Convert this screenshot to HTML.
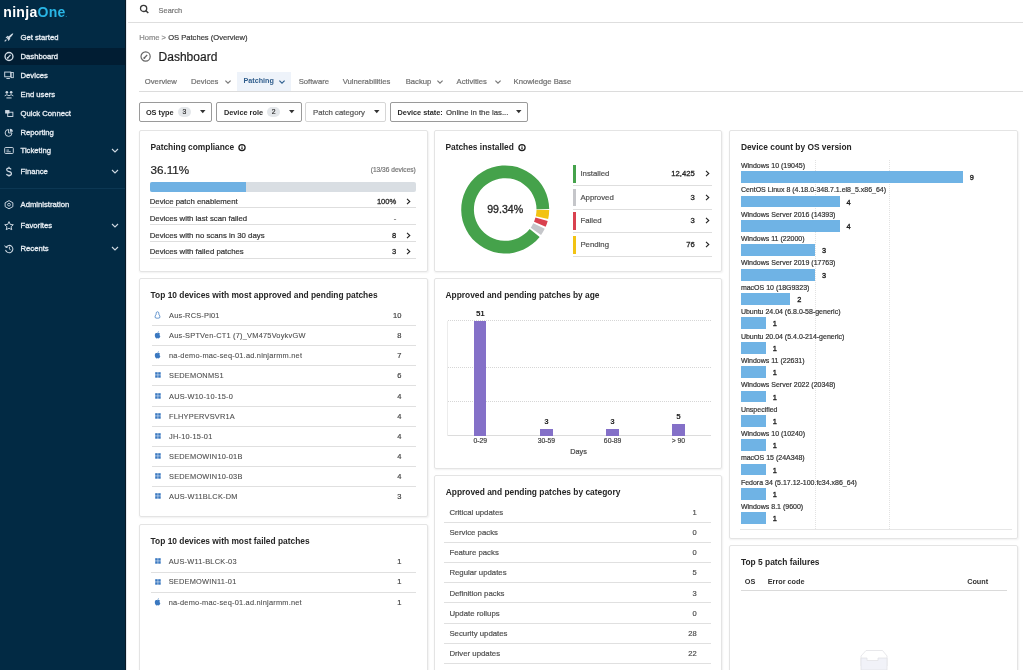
<!DOCTYPE html>
<html><head><meta charset="utf-8"><style>
html,body{margin:0;padding:0;width:1023px;height:670px;overflow:hidden;background:#fff;position:relative}
.t{position:absolute;white-space:nowrap;line-height:1;font-family:"Liberation Sans",sans-serif}
.t.r{-webkit-text-stroke:0.2px currentColor}
svg{overflow:visible}
</style></head><body>
<div style="position:absolute;left:0;top:0;width:1023px;height:670px;will-change:transform">
<div style="position:absolute;left:0px;top:0px;width:125px;height:670px;background:#022a44"></div><div style="position:absolute;left:125px;top:0px;width:1px;height:670px;background:#0a1a26"></div><div style="position:absolute;left:126px;top:0px;width:1px;height:670px;background:#e3e9f0"></div><div class="t" style="left:3.3px;top:5.40px;font-size:14px;color:#ffffff;font-weight:700;letter-spacing:0.3px">ninja<span style="color:#29b6e6">One</span><span style="color:#29b6e6;font-size:5px">.</span></div><div style="position:absolute;left:0px;top:48px;width:125px;height:17px;background:#011d33"></div><div class="t r" style="left:20.5px;top:33.73px;font-size:7.7px;color:#e8eef4;font-weight:400;-webkit-text-stroke:0.3px currentColor">Get started</div><div class="t r" style="left:20.5px;top:52.73px;font-size:7.7px;color:#e8eef4;font-weight:400;-webkit-text-stroke:0.3px currentColor">Dashboard</div><div class="t r" style="left:20.5px;top:71.73px;font-size:7.7px;color:#e8eef4;font-weight:400;-webkit-text-stroke:0.3px currentColor">Devices</div><div class="t r" style="left:20.5px;top:90.73px;font-size:7.7px;color:#e8eef4;font-weight:400;-webkit-text-stroke:0.3px currentColor">End users</div><div class="t r" style="left:20.5px;top:109.73px;font-size:7.7px;color:#e8eef4;font-weight:400;-webkit-text-stroke:0.3px currentColor">Quick Connect</div><div class="t r" style="left:20.5px;top:128.73px;font-size:7.7px;color:#e8eef4;font-weight:400;-webkit-text-stroke:0.3px currentColor">Reporting</div><div class="t r" style="left:20.5px;top:146.73px;font-size:7.7px;color:#e8eef4;font-weight:400;-webkit-text-stroke:0.3px currentColor">Ticketing</div><div class="t r" style="left:20.5px;top:167.73px;font-size:7.7px;color:#e8eef4;font-weight:400;-webkit-text-stroke:0.3px currentColor">Finance</div><div class="t r" style="left:20.5px;top:200.73px;font-size:7.7px;color:#e8eef4;font-weight:400;-webkit-text-stroke:0.3px currentColor">Administration</div><div class="t r" style="left:20.5px;top:221.73px;font-size:7.7px;color:#e8eef4;font-weight:400;-webkit-text-stroke:0.3px currentColor">Favorites</div><div class="t r" style="left:20.5px;top:244.73px;font-size:7.7px;color:#e8eef4;font-weight:400;-webkit-text-stroke:0.3px currentColor">Recents</div><svg style="position:absolute;left:111px;top:147.5px;" width="8" height="5" viewBox="0 0 8 5"><path d="M1 1 L4 4 L7 1" fill="none" stroke="#cfd9e2" stroke-width="1.1"/></svg><svg style="position:absolute;left:111px;top:168.5px;" width="8" height="5" viewBox="0 0 8 5"><path d="M1 1 L4 4 L7 1" fill="none" stroke="#cfd9e2" stroke-width="1.1"/></svg><svg style="position:absolute;left:111px;top:222.5px;" width="8" height="5" viewBox="0 0 8 5"><path d="M1 1 L4 4 L7 1" fill="none" stroke="#cfd9e2" stroke-width="1.1"/></svg><svg style="position:absolute;left:111px;top:245.5px;" width="8" height="5" viewBox="0 0 8 5"><path d="M1 1 L4 4 L7 1" fill="none" stroke="#cfd9e2" stroke-width="1.1"/></svg><div style="position:absolute;left:0px;top:188px;width:125px;height:1px;background:#0c3753"></div><svg style="position:absolute;left:3px;top:31.7px;" width="12" height="11" viewBox="0 0 12 11"><g transform="translate(6 5.5) scale(0.86) translate(-6 -5.5)"><path d="M3.5 6.5 L7.5 2.5 Q9.5 0.8 11 0.5 Q10.8 2.2 9 4 L5 8 Z" fill="#d0dae4"/><path d="M2 5.5 L4.5 3.5 L6 4 L3.5 6.5 Z M5.5 9.5 L7.5 7 L7 5.5 L4.5 8 Z" fill="#d0dae4"/><path d="M1 10 L3 8" stroke="#d0dae4" stroke-width="1.2"/></g></svg><svg style="position:absolute;left:3px;top:50.7px;" width="12" height="11" viewBox="0 0 12 11"><g transform="translate(6 5.5) scale(0.86) translate(-6 -5.5)"><circle cx="6" cy="5.5" r="4.6" fill="none" stroke="#d0dae4" stroke-width="1.6"/><path d="M4.3 7.3 L7.8 3.6" stroke="#d0dae4" stroke-width="1.4"/><circle cx="4.4" cy="7.2" r="1" fill="#d0dae4"/></g></svg><svg style="position:absolute;left:3px;top:69.7px;" width="12" height="11" viewBox="0 0 12 11"><g transform="translate(6 5.5) scale(0.86) translate(-6 -5.5)"><rect x="1" y="1.5" width="7" height="5.5" fill="none" stroke="#d0dae4" stroke-width="1.1"/><rect x="8.5" y="2" width="2.5" height="6" fill="none" stroke="#d0dae4" stroke-width="1"/><path d="M3 9 H7" stroke="#d0dae4" stroke-width="1.1"/></g></svg><svg style="position:absolute;left:3px;top:88.7px;" width="12" height="11" viewBox="0 0 12 11"><g transform="translate(6 5.5) scale(0.86) translate(-6 -5.5)"><circle cx="3.5" cy="3" r="1.5" fill="#d0dae4"/><circle cx="8.5" cy="3" r="1.5" fill="#d0dae4"/><path d="M1 7 Q3.5 4.5 6 7 Q8.5 4.5 11 7" fill="none" stroke="#d0dae4" stroke-width="1.1"/><path d="M3 9.5 H9" stroke="#d0dae4" stroke-width="1.2"/></g></svg><svg style="position:absolute;left:3px;top:107.7px;" width="12" height="11" viewBox="0 0 12 11"><g transform="translate(6 5.5) scale(0.86) translate(-6 -5.5)"><rect x="1.5" y="1.5" width="5" height="4" fill="#d0dae4"/><rect x="4.5" y="4" width="6" height="5" fill="none" stroke="#d0dae4" stroke-width="1.1"/></g></svg><svg style="position:absolute;left:3px;top:126.7px;" width="12" height="11" viewBox="0 0 12 11"><g transform="translate(6 5.5) scale(0.86) translate(-6 -5.5)"><path d="M5.5 2 A4 4 0 1 0 9.5 6 L5.5 6 Z" fill="none" stroke="#d0dae4" stroke-width="1.1"/><path d="M7 1 L7 4.5 L10.5 4.5 A3.5 3.5 0 0 0 7 1 Z" fill="#d0dae4"/></g></svg><svg style="position:absolute;left:3px;top:144.7px;" width="12" height="11" viewBox="0 0 12 11"><g transform="translate(6 5.5) scale(0.86) translate(-6 -5.5)"><rect x="1" y="2" width="10" height="7" rx="1" fill="none" stroke="#d0dae4" stroke-width="1.1"/><path d="M3 5 H6 M3 7 H8" stroke="#d0dae4" stroke-width="1"/></g></svg><svg style="position:absolute;left:3px;top:165.7px;" width="12" height="11" viewBox="0 0 12 11"><g transform="translate(6 5.5) scale(0.86) translate(-6 -5.5)"><path d="M8.5 3 Q7.5 1.5 5.8 1.5 Q3.3 1.5 3.3 3.5 Q3.3 5.2 6 5.6 Q8.8 6 8.8 8 Q8.8 10 6 10 Q4 10 3 8.5" fill="none" stroke="#d0dae4" stroke-width="1.4"/><path d="M6 0 V1.5 M6 10 V11.5" stroke="#d0dae4" stroke-width="1.2"/></g></svg><svg style="position:absolute;left:3px;top:198.7px;" width="12" height="11" viewBox="0 0 12 11"><g transform="translate(6 5.5) scale(0.86) translate(-6 -5.5)"><path d="M6 1 L10.5 3.5 L10.5 8 L6 10.5 L1.5 8 L1.5 3.5 Z" fill="none" stroke="#d0dae4" stroke-width="1.1"/><circle cx="6" cy="5.7" r="1.6" fill="none" stroke="#d0dae4" stroke-width="1"/></g></svg><svg style="position:absolute;left:3px;top:219.7px;" width="12" height="11" viewBox="0 0 12 11"><g transform="translate(6 5.5) scale(0.86) translate(-6 -5.5)"><path d="M6 1 L7.5 4.3 L11 4.6 L8.4 6.9 L9.2 10.4 L6 8.6 L2.8 10.4 L3.6 6.9 L1 4.6 L4.5 4.3 Z" fill="none" stroke="#d0dae4" stroke-width="1.1"/></g></svg><svg style="position:absolute;left:3px;top:242.7px;" width="12" height="11" viewBox="0 0 12 11"><g transform="translate(6 5.5) scale(0.86) translate(-6 -5.5)"><path d="M2.5 4 A4.3 4.3 0 1 1 2 7" fill="none" stroke="#d0dae4" stroke-width="1.2"/><path d="M1 2 L2.5 4.5 L5 3.5" fill="none" stroke="#d0dae4" stroke-width="1.1"/><path d="M6.5 3.5 V6 L8 7.5" fill="none" stroke="#d0dae4" stroke-width="1.1"/></g></svg><svg style="position:absolute;left:139px;top:4px;" width="11" height="10" viewBox="0 0 11 10"><circle cx="4.6" cy="4.4" r="3.1" fill="none" stroke="#3a3a3a" stroke-width="1.3"/><path d="M6.9 6.7 L9.3 9" stroke="#3a3a3a" stroke-width="1.5"/></svg><div class="t r" style="left:158.6px;top:6.99px;font-size:7.4px;color:#777;font-weight:400;">Search</div><div style="position:absolute;left:128px;top:22px;width:895px;height:1px;background:#dedede"></div><div class="t r" style="left:139.2px;top:33.82px;font-size:7.6px;color:#3a3a3a;font-weight:400;"><span style="color:#888">Home</span> <span style="color:#888">&gt;</span> OS Patches (Overview)</div><svg style="position:absolute;left:140px;top:50.5px;" width="12" height="12" viewBox="0 0 12 12"><circle cx="5.6" cy="5.5" r="4.6" fill="none" stroke="#666" stroke-width="1.2"/><path d="M4.2 7 L7.2 4" stroke="#666" stroke-width="1.2"/><circle cx="4.3" cy="6.9" r="1" fill="#666"/></svg><div class="t r" style="left:158.6px;top:51.09px;font-size:12px;color:#1d1d1d;font-weight:400;">Dashboard</div><div style="position:absolute;left:237px;top:72px;width:54px;height:19px;background:#eef3fa"></div><div class="t r" style="left:144.8px;top:77.73px;font-size:7.7px;color:#6e6e6e;font-weight:400;">Overview</div><div class="t r" style="left:191px;top:77.73px;font-size:7.7px;color:#6e6e6e;font-weight:400;">Devices</div><div class="t" style="left:243.5px;top:77.16px;font-size:7.2px;color:#2f5d8c;font-weight:700;">Patching</div><div class="t r" style="left:298.7px;top:77.73px;font-size:7.7px;color:#6e6e6e;font-weight:400;">Software</div><div class="t r" style="left:342.7px;top:77.73px;font-size:7.7px;color:#6e6e6e;font-weight:400;">Vulnerabilities</div><div class="t r" style="left:405.7px;top:77.73px;font-size:7.7px;color:#6e6e6e;font-weight:400;">Backup</div><div class="t r" style="left:456.6px;top:77.73px;font-size:7.7px;color:#6e6e6e;font-weight:400;">Activities</div><div class="t r" style="left:513.5px;top:77.73px;font-size:7.7px;color:#6e6e6e;font-weight:400;">Knowledge Base</div><svg style="position:absolute;left:225px;top:80px;" width="6" height="4" viewBox="0 0 6 4"><path d="M0.4 0.6 L3 3.2 L5.6 0.6" fill="none" stroke="#777" stroke-width="1.15"/></svg><svg style="position:absolute;left:278.8px;top:80px;" width="6" height="4" viewBox="0 0 6 4"><path d="M0.4 0.6 L3 3.2 L5.6 0.6" fill="none" stroke="#2f5f8f" stroke-width="1.15"/></svg><svg style="position:absolute;left:436.7px;top:80px;" width="6" height="4" viewBox="0 0 6 4"><path d="M0.4 0.6 L3 3.2 L5.6 0.6" fill="none" stroke="#777" stroke-width="1.15"/></svg><svg style="position:absolute;left:494.7px;top:80px;" width="6" height="4" viewBox="0 0 6 4"><path d="M0.4 0.6 L3 3.2 L5.6 0.6" fill="none" stroke="#777" stroke-width="1.15"/></svg><div style="position:absolute;left:139px;top:91px;width:884px;height:1px;background:#dcdcdc"></div><div style="position:absolute;left:139px;top:102px;width:73px;height:20px;border:1px solid #9a9a9a;border-radius:2px;box-sizing:border-box;background:#fff"></div><div style="position:absolute;left:216px;top:102px;width:86px;height:20px;border:1px solid #9a9a9a;border-radius:2px;box-sizing:border-box;background:#fff"></div><div style="position:absolute;left:305px;top:102px;width:81px;height:20px;border:1px solid #d6d6d6;border-radius:2px;box-sizing:border-box;background:#fff"></div><div style="position:absolute;left:390px;top:102px;width:138px;height:20px;border:1px solid #9a9a9a;border-radius:2px;box-sizing:border-box;background:#fff"></div><div class="t" style="left:145.9px;top:109.03px;font-size:7.35px;color:#2a2a2a;font-weight:700;">OS type</div><div class="t" style="left:223.9px;top:109.03px;font-size:7.35px;color:#2a2a2a;font-weight:700;">Device role</div><div class="t r" style="left:313px;top:108.65px;font-size:7.8px;color:#555;font-weight:400;">Patch category</div><div class="t" style="left:397.5px;top:109.03px;font-size:7.35px;color:#2a2a2a;font-weight:700;">Device state:</div><div class="t r" style="left:446px;top:108.65px;font-size:7.8px;color:#444;font-weight:400;">Online in the las...</div><div style="position:absolute;left:178.0px;top:106.5px;width:13px;height:10px;background:#e4e7ea;border-radius:5px"></div><div class="t r" style="left:184.5px;transform:translateX(-50%);top:109.49px;font-size:6.8px;color:#333;font-weight:400;">3</div><div style="position:absolute;left:267.2px;top:106.5px;width:13px;height:10px;background:#e4e7ea;border-radius:5px"></div><div class="t r" style="left:273.7px;transform:translateX(-50%);top:109.49px;font-size:6.8px;color:#333;font-weight:400;">2</div><svg style="position:absolute;left:199.7px;top:110px;" width="6" height="4" viewBox="0 0 6 4"><path d="M0 0 H5.5 L2.75 3.2 Z" fill="#333"/></svg><svg style="position:absolute;left:289px;top:110px;" width="6" height="4" viewBox="0 0 6 4"><path d="M0 0 H5.5 L2.75 3.2 Z" fill="#333"/></svg><svg style="position:absolute;left:373.6px;top:110px;" width="6" height="4" viewBox="0 0 6 4"><path d="M0 0 H5.5 L2.75 3.2 Z" fill="#333"/></svg><svg style="position:absolute;left:516px;top:110px;" width="6" height="4" viewBox="0 0 6 4"><path d="M0 0 H5.5 L2.75 3.2 Z" fill="#333"/></svg><div style="position:absolute;left:139px;top:130px;width:289px;height:142px;border:1px solid #e4e4e4;border-radius:2px;box-sizing:border-box;background:#fff;box-shadow:0.5px 1px 2px rgba(0,0,0,0.06)"></div><div style="position:absolute;left:434px;top:130px;width:288px;height:142px;border:1px solid #e4e4e4;border-radius:2px;box-sizing:border-box;background:#fff;box-shadow:0.5px 1px 2px rgba(0,0,0,0.06)"></div><div style="position:absolute;left:729px;top:130px;width:289px;height:409px;border:1px solid #e4e4e4;border-radius:2px;box-sizing:border-box;background:#fff;box-shadow:0.5px 1px 2px rgba(0,0,0,0.06)"></div><div style="position:absolute;left:139px;top:278px;width:289px;height:239px;border:1px solid #e4e4e4;border-radius:2px;box-sizing:border-box;background:#fff;box-shadow:0.5px 1px 2px rgba(0,0,0,0.06)"></div><div style="position:absolute;left:434px;top:278px;width:288px;height:191px;border:1px solid #e4e4e4;border-radius:2px;box-sizing:border-box;background:#fff;box-shadow:0.5px 1px 2px rgba(0,0,0,0.06)"></div><div style="position:absolute;left:139px;top:524px;width:289px;height:176px;border:1px solid #e4e4e4;border-radius:2px;box-sizing:border-box;background:#fff;box-shadow:0.5px 1px 2px rgba(0,0,0,0.06)"></div><div style="position:absolute;left:434px;top:475px;width:288px;height:225px;border:1px solid #e4e4e4;border-radius:2px;box-sizing:border-box;background:#fff;box-shadow:0.5px 1px 2px rgba(0,0,0,0.06)"></div><div style="position:absolute;left:729px;top:545px;width:289px;height:155px;border:1px solid #e4e4e4;border-radius:2px;box-sizing:border-box;background:#fff;box-shadow:0.5px 1px 2px rgba(0,0,0,0.06)"></div><div class="t" style="left:150.4px;top:143.14px;font-size:8.4px;color:#262626;font-weight:700;">Patching compliance</div><svg style="position:absolute;left:237.5px;top:144px;" width="8" height="8" viewBox="0 0 8 8"><circle cx="4" cy="3.6" r="3.1" fill="none" stroke="#1e1e1e" stroke-width="1.25"/><path d="M4 3.2 V5.2" stroke="#1e1e1e" stroke-width="1.3"/><circle cx="4" cy="2.1" r="0.55" fill="#1e1e1e"/></svg><div class="t r" style="left:150.4px;top:164.35px;font-size:11.7px;color:#1d1d1d;font-weight:400;">36.11%</div><div class="t r" style="right:607.2px;top:166.66px;font-size:6.6px;color:#777;font-weight:400;">(13/36 devices)</div><div style="position:absolute;left:150px;top:182px;width:266px;height:10px;background:#d9dee3;border-radius:2px"></div><div style="position:absolute;left:150px;top:182px;width:96px;height:10px;background:#6fb1e3;border-radius:2px 0 0 2px"></div><div class="t r" style="left:149.7px;top:197.65px;font-size:7.8px;color:#333;font-weight:400;">Device patch enablement</div><div class="t r" style="right:626.7px;top:197.82px;font-size:7.6px;color:#2a2a2a;font-weight:400;-webkit-text-stroke:0.3px currentColor">100%</div><svg style="position:absolute;left:405.5px;top:198.3px;" width="5" height="7" viewBox="0 0 5 7"><path d="M1 0.8 L3.8 3.5 L1 6.2" fill="none" stroke="#222" stroke-width="1.1"/></svg><div style="position:absolute;left:150px;top:207px;width:266px;height:1px;background:#dedede"></div><div class="t r" style="left:149.7px;top:214.65px;font-size:7.8px;color:#333;font-weight:400;">Devices with last scan failed</div><div class="t r" style="right:626.7px;top:214.82px;font-size:7.6px;color:#777;font-weight:400;-webkit-text-stroke:0.3px currentColor">-</div><div style="position:absolute;left:150px;top:224px;width:266px;height:1px;background:#dedede"></div><div class="t r" style="left:149.7px;top:231.65px;font-size:7.8px;color:#333;font-weight:400;">Devices with no scans in 30 days</div><div class="t r" style="right:626.7px;top:231.82px;font-size:7.6px;color:#2a2a2a;font-weight:400;-webkit-text-stroke:0.3px currentColor">8</div><svg style="position:absolute;left:405.5px;top:231.6px;" width="5" height="7" viewBox="0 0 5 7"><path d="M1 0.8 L3.8 3.5 L1 6.2" fill="none" stroke="#222" stroke-width="1.1"/></svg><div style="position:absolute;left:150px;top:241px;width:266px;height:1px;background:#dedede"></div><div class="t r" style="left:149.7px;top:247.65px;font-size:7.8px;color:#333;font-weight:400;">Devices with failed patches</div><div class="t r" style="right:626.7px;top:247.82px;font-size:7.6px;color:#2a2a2a;font-weight:400;-webkit-text-stroke:0.3px currentColor">3</div><svg style="position:absolute;left:405.5px;top:248.2px;" width="5" height="7" viewBox="0 0 5 7"><path d="M1 0.8 L3.8 3.5 L1 6.2" fill="none" stroke="#222" stroke-width="1.1"/></svg><div style="position:absolute;left:150px;top:258px;width:266px;height:1px;background:#dedede"></div><div class="t" style="left:445.4px;top:143.14px;font-size:8.4px;color:#262626;font-weight:700;">Patches installed</div><svg style="position:absolute;left:518px;top:144px;" width="8" height="8" viewBox="0 0 8 8"><circle cx="4" cy="3.6" r="3.1" fill="none" stroke="#1e1e1e" stroke-width="1.25"/><path d="M4 3.2 V5.2" stroke="#1e1e1e" stroke-width="1.3"/><circle cx="4" cy="2.1" r="0.55" fill="#1e1e1e"/></svg><svg style="position:absolute;left:0;top:0" width="1023" height="670"><path d="M549.20 209.88 A44 44 0 0 1 548.16 219.02 L535.76 216.27 A31.3 31.3 0 0 0 536.50 209.77 Z" fill="#f2c313"/><path d="M547.70 220.89 A44 44 0 0 1 545.70 226.69 L534.01 221.73 A31.3 31.3 0 0 0 535.43 217.60 Z" fill="#d9414f"/><path d="M544.75 228.79 A44 44 0 0 1 541.02 235.05 L530.68 227.68 A31.3 31.3 0 0 0 533.33 223.22 Z" fill="#c5c6ca"/><path d="M539.63 236.89 A44 44 0 1 1 549.20 209.12 L536.50 209.23 A31.3 31.3 0 1 0 529.70 228.98 Z" fill="#45a24b"/></svg><div class="t r" style="left:505.2px;transform:translateX(-50%);top:204.28px;font-size:10.6px;color:#262626;font-weight:400;-webkit-text-stroke:0.3px currentColor">99.34%</div><div style="position:absolute;left:573px;top:165.2px;width:3px;height:17.80000000000001px;background:#45a24b"></div><div class="t r" style="left:580.4px;top:169.65px;font-size:7.8px;color:#505050;font-weight:400;">Installed</div><div class="t r" style="right:328.20000000000005px;top:169.73px;font-size:7.7px;color:#262626;font-weight:400;-webkit-text-stroke:0.3px currentColor">12,425</div><svg style="position:absolute;left:704.5px;top:169.8px;" width="5" height="7" viewBox="0 0 5 7"><path d="M1 0.8 L3.8 3.5 L1 6.2" fill="none" stroke="#222" stroke-width="1.1"/></svg><div style="position:absolute;left:573px;top:185px;width:139px;height:1px;background:#dedede"></div><div style="position:absolute;left:573px;top:188.7px;width:3px;height:17.30000000000001px;background:#c5c6ca"></div><div class="t r" style="left:580.4px;top:193.65px;font-size:7.8px;color:#505050;font-weight:400;">Approved</div><div class="t r" style="right:328.20000000000005px;top:193.73px;font-size:7.7px;color:#262626;font-weight:400;-webkit-text-stroke:0.3px currentColor">3</div><svg style="position:absolute;left:704.5px;top:193.7px;" width="5" height="7" viewBox="0 0 5 7"><path d="M1 0.8 L3.8 3.5 L1 6.2" fill="none" stroke="#222" stroke-width="1.1"/></svg><div style="position:absolute;left:573px;top:209px;width:139px;height:1px;background:#dedede"></div><div style="position:absolute;left:573px;top:212.2px;width:3px;height:17.80000000000001px;background:#d9414f"></div><div class="t r" style="left:580.4px;top:216.65px;font-size:7.8px;color:#505050;font-weight:400;">Failed</div><div class="t r" style="right:328.20000000000005px;top:216.73px;font-size:7.7px;color:#262626;font-weight:400;-webkit-text-stroke:0.3px currentColor">3</div><svg style="position:absolute;left:704.5px;top:216.9px;" width="5" height="7" viewBox="0 0 5 7"><path d="M1 0.8 L3.8 3.5 L1 6.2" fill="none" stroke="#222" stroke-width="1.1"/></svg><div style="position:absolute;left:573px;top:232px;width:139px;height:1px;background:#dedede"></div><div style="position:absolute;left:573px;top:235.7px;width:3px;height:18.0px;background:#f2c313"></div><div class="t r" style="left:580.4px;top:240.65px;font-size:7.8px;color:#505050;font-weight:400;">Pending</div><div class="t r" style="right:328.20000000000005px;top:240.73px;font-size:7.7px;color:#262626;font-weight:400;-webkit-text-stroke:0.3px currentColor">76</div><svg style="position:absolute;left:704.5px;top:240.7px;" width="5" height="7" viewBox="0 0 5 7"><path d="M1 0.8 L3.8 3.5 L1 6.2" fill="none" stroke="#222" stroke-width="1.1"/></svg><div style="position:absolute;left:573px;top:256px;width:139px;height:1px;background:#dedede"></div><div class="t" style="left:740.9px;top:143.14px;font-size:8.4px;color:#262626;font-weight:700;">Device count by OS version</div><div style="position:absolute;left:815px;top:160px;width:0px;height:369px;border-left:1px dotted #e2e2e2"></div><div style="position:absolute;left:889px;top:160px;width:0px;height:369px;border-left:1px dotted #e2e2e2"></div><div style="position:absolute;left:740px;top:529px;width:272px;height:1px;background:#e6e6e6"></div><div class="t r" style="left:740.9px;top:162.32px;font-size:7.0px;color:#333;font-weight:400;">Windows 10 (19045)</div><div style="position:absolute;left:741px;top:171.3px;width:221.70000000000005px;height:11.8px;background:#6fb3e5"></div><div class="t r" style="left:969.7px;top:173.99px;font-size:7.4px;color:#1e1e1e;font-weight:400;-webkit-text-stroke:0.35px currentColor">9</div><div class="t r" style="left:740.9px;top:186.32px;font-size:7.0px;color:#333;font-weight:400;">CentOS Linux 8 (4.18.0-348.7.1.el8_5.x86_64)</div><div style="position:absolute;left:741px;top:195.66000000000003px;width:98.53333333333336px;height:11.8px;background:#6fb3e5"></div><div class="t r" style="left:846.5333333333333px;top:198.99px;font-size:7.4px;color:#1e1e1e;font-weight:400;-webkit-text-stroke:0.35px currentColor">4</div><div class="t r" style="left:740.9px;top:211.32px;font-size:7.0px;color:#333;font-weight:400;">Windows Server 2016 (14393)</div><div style="position:absolute;left:741px;top:220.02px;width:98.53333333333336px;height:11.8px;background:#6fb3e5"></div><div class="t r" style="left:846.5333333333333px;top:222.99px;font-size:7.4px;color:#1e1e1e;font-weight:400;-webkit-text-stroke:0.35px currentColor">4</div><div class="t r" style="left:740.9px;top:235.32px;font-size:7.0px;color:#333;font-weight:400;">Windows 11 (22000)</div><div style="position:absolute;left:741px;top:244.38px;width:73.90000000000002px;height:11.8px;background:#6fb3e5"></div><div class="t r" style="left:821.9px;top:246.99px;font-size:7.4px;color:#1e1e1e;font-weight:400;-webkit-text-stroke:0.35px currentColor">3</div><div class="t r" style="left:740.9px;top:259.32px;font-size:7.0px;color:#333;font-weight:400;">Windows Server 2019 (17763)</div><div style="position:absolute;left:741px;top:268.74px;width:73.90000000000002px;height:11.8px;background:#6fb3e5"></div><div class="t r" style="left:821.9px;top:271.99px;font-size:7.4px;color:#1e1e1e;font-weight:400;-webkit-text-stroke:0.35px currentColor">3</div><div class="t r" style="left:740.9px;top:284.32px;font-size:7.0px;color:#333;font-weight:400;">macOS 10 (18G9323)</div><div style="position:absolute;left:741px;top:293.1px;width:49.26666666666668px;height:11.8px;background:#6fb3e5"></div><div class="t r" style="left:797.2666666666667px;top:295.99px;font-size:7.4px;color:#1e1e1e;font-weight:400;-webkit-text-stroke:0.35px currentColor">2</div><div class="t r" style="left:740.9px;top:308.32px;font-size:7.0px;color:#333;font-weight:400;">Ubuntu 24.04 (6.8.0-58-generic)</div><div style="position:absolute;left:741px;top:317.46px;width:24.63333333333334px;height:11.8px;background:#6fb3e5"></div><div class="t r" style="left:772.6333333333333px;top:319.99px;font-size:7.4px;color:#1e1e1e;font-weight:400;-webkit-text-stroke:0.35px currentColor">1</div><div class="t r" style="left:740.9px;top:333.32px;font-size:7.0px;color:#333;font-weight:400;">Ubuntu 20.04 (5.4.0-214-generic)</div><div style="position:absolute;left:741px;top:341.82px;width:24.63333333333334px;height:11.8px;background:#6fb3e5"></div><div class="t r" style="left:772.6333333333333px;top:344.99px;font-size:7.4px;color:#1e1e1e;font-weight:400;-webkit-text-stroke:0.35px currentColor">1</div><div class="t r" style="left:740.9px;top:357.32px;font-size:7.0px;color:#333;font-weight:400;">Windows 11 (22631)</div><div style="position:absolute;left:741px;top:366.18px;width:24.63333333333334px;height:11.8px;background:#6fb3e5"></div><div class="t r" style="left:772.6333333333333px;top:368.99px;font-size:7.4px;color:#1e1e1e;font-weight:400;-webkit-text-stroke:0.35px currentColor">1</div><div class="t r" style="left:740.9px;top:381.32px;font-size:7.0px;color:#333;font-weight:400;">Windows Server 2022 (20348)</div><div style="position:absolute;left:741px;top:390.54px;width:24.63333333333334px;height:11.8px;background:#6fb3e5"></div><div class="t r" style="left:772.6333333333333px;top:393.99px;font-size:7.4px;color:#1e1e1e;font-weight:400;-webkit-text-stroke:0.35px currentColor">1</div><div class="t r" style="left:740.9px;top:406.32px;font-size:7.0px;color:#333;font-weight:400;">Unspecified</div><div style="position:absolute;left:741px;top:414.90000000000003px;width:24.63333333333334px;height:11.8px;background:#6fb3e5"></div><div class="t r" style="left:772.6333333333333px;top:417.99px;font-size:7.4px;color:#1e1e1e;font-weight:400;-webkit-text-stroke:0.35px currentColor">1</div><div class="t r" style="left:740.9px;top:430.32px;font-size:7.0px;color:#333;font-weight:400;">Windows 10 (10240)</div><div style="position:absolute;left:741px;top:439.26px;width:24.63333333333334px;height:11.8px;background:#6fb3e5"></div><div class="t r" style="left:772.6333333333333px;top:441.99px;font-size:7.4px;color:#1e1e1e;font-weight:400;-webkit-text-stroke:0.35px currentColor">1</div><div class="t r" style="left:740.9px;top:454.32px;font-size:7.0px;color:#333;font-weight:400;">macOS 15 (24A348)</div><div style="position:absolute;left:741px;top:463.62px;width:24.63333333333334px;height:11.8px;background:#6fb3e5"></div><div class="t r" style="left:772.6333333333333px;top:466.99px;font-size:7.4px;color:#1e1e1e;font-weight:400;-webkit-text-stroke:0.35px currentColor">1</div><div class="t r" style="left:740.9px;top:479.32px;font-size:7.0px;color:#333;font-weight:400;">Fedora 34 (5.17.12-100.fc34.x86_64)</div><div style="position:absolute;left:741px;top:487.98px;width:24.63333333333334px;height:11.8px;background:#6fb3e5"></div><div class="t r" style="left:772.6333333333333px;top:490.99px;font-size:7.4px;color:#1e1e1e;font-weight:400;-webkit-text-stroke:0.35px currentColor">1</div><div class="t r" style="left:740.9px;top:503.32px;font-size:7.0px;color:#333;font-weight:400;">Windows 8.1 (9600)</div><div style="position:absolute;left:741px;top:512.3399999999999px;width:24.63333333333334px;height:11.8px;background:#6fb3e5"></div><div class="t r" style="left:772.6333333333333px;top:514.99px;font-size:7.4px;color:#1e1e1e;font-weight:400;-webkit-text-stroke:0.35px currentColor">1</div><div class="t" style="left:150.6px;top:291.14px;font-size:8.4px;color:#262626;font-weight:700;">Top 10 devices with most approved and pending patches</div><svg style="position:absolute;left:154px;top:311.0px;" width="7" height="8" viewBox="0 0 7 8"><path d="M3.5 0.8 C2 0.8 2.2 2.5 2.2 3.2 C1.5 4.2 0.8 5.5 1.2 6.6 C1.8 7.4 5.2 7.4 5.8 6.6 C6.2 5.5 5.5 4.2 4.8 3.2 C4.8 2.5 5 0.8 3.5 0.8 Z" fill="none" stroke="#3a78c0" stroke-width="0.8"/></svg><div class="t r" style="left:169px;top:311.99px;font-size:7.4px;color:#4e4e4e;font-weight:400;letter-spacing:0.22px;-webkit-text-stroke:0.1px currentColor">Aus-RCS-Pi01</div><div class="t r" style="right:621.7px;top:311.90px;font-size:7.5px;color:#444;font-weight:400;">10</div><div style="position:absolute;left:152px;top:325px;width:264px;height:1px;background:#e0e0e0"></div><svg style="position:absolute;left:154px;top:331.16px;" width="7" height="8" viewBox="0 0 7 8"><path d="M3.5 2.3 C2.5 1.8 0.8 2 0.8 4.2 C0.8 6 2 7.6 2.8 7.4 C3.2 7.3 3.8 7.3 4.2 7.4 C5 7.6 6.2 6 6.3 5.2 C5.5 4.8 5.3 3.2 6.1 2.6 C5.4 1.8 4.3 1.9 3.5 2.3 Z M3.6 1.9 C3.6 1 4.2 0.4 4.9 0.3 C4.9 1.1 4.4 1.8 3.6 1.9 Z" fill="#3a78c0"/></svg><div class="t r" style="left:169px;top:331.99px;font-size:7.4px;color:#4e4e4e;font-weight:400;letter-spacing:0.22px;-webkit-text-stroke:0.1px currentColor">Aus-SPTVen-CT1 (7)_VM475VoykvGW</div><div class="t r" style="right:621.7px;top:331.90px;font-size:7.5px;color:#444;font-weight:400;">8</div><div style="position:absolute;left:152px;top:345px;width:264px;height:1px;background:#e0e0e0"></div><svg style="position:absolute;left:154px;top:351.32px;" width="7" height="8" viewBox="0 0 7 8"><path d="M3.5 2.3 C2.5 1.8 0.8 2 0.8 4.2 C0.8 6 2 7.6 2.8 7.4 C3.2 7.3 3.8 7.3 4.2 7.4 C5 7.6 6.2 6 6.3 5.2 C5.5 4.8 5.3 3.2 6.1 2.6 C5.4 1.8 4.3 1.9 3.5 2.3 Z M3.6 1.9 C3.6 1 4.2 0.4 4.9 0.3 C4.9 1.1 4.4 1.8 3.6 1.9 Z" fill="#3a78c0"/></svg><div class="t r" style="left:169px;top:351.99px;font-size:7.4px;color:#4e4e4e;font-weight:400;letter-spacing:0.22px;-webkit-text-stroke:0.1px currentColor">na-demo-mac-seq-01.ad.ninjarmm.net</div><div class="t r" style="right:621.7px;top:351.90px;font-size:7.5px;color:#444;font-weight:400;">7</div><div style="position:absolute;left:152px;top:365px;width:264px;height:1px;background:#e0e0e0"></div><svg style="position:absolute;left:154.5px;top:372.48px;" width="6" height="6" viewBox="0 0 6 6"><rect x="0.2" y="0.2" width="2.5" height="2.5" fill="#3a78c0"/><rect x="3.2" y="0.2" width="2.5" height="2.5" fill="#3a78c0"/><rect x="0.2" y="3.2" width="2.5" height="2.5" fill="#3a78c0"/><rect x="3.2" y="3.2" width="2.5" height="2.5" fill="#3a78c0"/></svg><div class="t r" style="left:169px;top:371.99px;font-size:7.4px;color:#4e4e4e;font-weight:400;letter-spacing:0.22px;-webkit-text-stroke:0.1px currentColor">SEDEMONMS1</div><div class="t r" style="right:621.7px;top:371.90px;font-size:7.5px;color:#444;font-weight:400;">6</div><div style="position:absolute;left:152px;top:385px;width:264px;height:1px;background:#e0e0e0"></div><svg style="position:absolute;left:154.5px;top:392.64px;" width="6" height="6" viewBox="0 0 6 6"><rect x="0.2" y="0.2" width="2.5" height="2.5" fill="#3a78c0"/><rect x="3.2" y="0.2" width="2.5" height="2.5" fill="#3a78c0"/><rect x="0.2" y="3.2" width="2.5" height="2.5" fill="#3a78c0"/><rect x="3.2" y="3.2" width="2.5" height="2.5" fill="#3a78c0"/></svg><div class="t r" style="left:169px;top:392.99px;font-size:7.4px;color:#4e4e4e;font-weight:400;letter-spacing:0.22px;-webkit-text-stroke:0.1px currentColor">AUS-W10-10-15-0</div><div class="t r" style="right:621.7px;top:392.90px;font-size:7.5px;color:#444;font-weight:400;">4</div><div style="position:absolute;left:152px;top:406px;width:264px;height:1px;background:#e0e0e0"></div><svg style="position:absolute;left:154.5px;top:412.8px;" width="6" height="6" viewBox="0 0 6 6"><rect x="0.2" y="0.2" width="2.5" height="2.5" fill="#3a78c0"/><rect x="3.2" y="0.2" width="2.5" height="2.5" fill="#3a78c0"/><rect x="0.2" y="3.2" width="2.5" height="2.5" fill="#3a78c0"/><rect x="3.2" y="3.2" width="2.5" height="2.5" fill="#3a78c0"/></svg><div class="t r" style="left:169px;top:412.99px;font-size:7.4px;color:#4e4e4e;font-weight:400;letter-spacing:0.22px;-webkit-text-stroke:0.1px currentColor">FLHYPERVSVR1A</div><div class="t r" style="right:621.7px;top:412.90px;font-size:7.5px;color:#444;font-weight:400;">4</div><div style="position:absolute;left:152px;top:426px;width:264px;height:1px;background:#e0e0e0"></div><svg style="position:absolute;left:154.5px;top:432.96000000000004px;" width="6" height="6" viewBox="0 0 6 6"><rect x="0.2" y="0.2" width="2.5" height="2.5" fill="#3a78c0"/><rect x="3.2" y="0.2" width="2.5" height="2.5" fill="#3a78c0"/><rect x="0.2" y="3.2" width="2.5" height="2.5" fill="#3a78c0"/><rect x="3.2" y="3.2" width="2.5" height="2.5" fill="#3a78c0"/></svg><div class="t r" style="left:169px;top:432.99px;font-size:7.4px;color:#4e4e4e;font-weight:400;letter-spacing:0.22px;-webkit-text-stroke:0.1px currentColor">JH-10-15-01</div><div class="t r" style="right:621.7px;top:432.90px;font-size:7.5px;color:#444;font-weight:400;">4</div><div style="position:absolute;left:152px;top:446px;width:264px;height:1px;background:#e0e0e0"></div><svg style="position:absolute;left:154.5px;top:453.12px;" width="6" height="6" viewBox="0 0 6 6"><rect x="0.2" y="0.2" width="2.5" height="2.5" fill="#3a78c0"/><rect x="3.2" y="0.2" width="2.5" height="2.5" fill="#3a78c0"/><rect x="0.2" y="3.2" width="2.5" height="2.5" fill="#3a78c0"/><rect x="3.2" y="3.2" width="2.5" height="2.5" fill="#3a78c0"/></svg><div class="t r" style="left:169px;top:452.99px;font-size:7.4px;color:#4e4e4e;font-weight:400;letter-spacing:0.22px;-webkit-text-stroke:0.1px currentColor">SEDEMOWIN10-01B</div><div class="t r" style="right:621.7px;top:452.90px;font-size:7.5px;color:#444;font-weight:400;">4</div><div style="position:absolute;left:152px;top:466px;width:264px;height:1px;background:#e0e0e0"></div><svg style="position:absolute;left:154.5px;top:473.28px;" width="6" height="6" viewBox="0 0 6 6"><rect x="0.2" y="0.2" width="2.5" height="2.5" fill="#3a78c0"/><rect x="3.2" y="0.2" width="2.5" height="2.5" fill="#3a78c0"/><rect x="0.2" y="3.2" width="2.5" height="2.5" fill="#3a78c0"/><rect x="3.2" y="3.2" width="2.5" height="2.5" fill="#3a78c0"/></svg><div class="t r" style="left:169px;top:472.99px;font-size:7.4px;color:#4e4e4e;font-weight:400;letter-spacing:0.22px;-webkit-text-stroke:0.1px currentColor">SEDEMOWIN10-03B</div><div class="t r" style="right:621.7px;top:472.90px;font-size:7.5px;color:#444;font-weight:400;">4</div><div style="position:absolute;left:152px;top:486px;width:264px;height:1px;background:#e0e0e0"></div><svg style="position:absolute;left:154.5px;top:493.44px;" width="6" height="6" viewBox="0 0 6 6"><rect x="0.2" y="0.2" width="2.5" height="2.5" fill="#3a78c0"/><rect x="3.2" y="0.2" width="2.5" height="2.5" fill="#3a78c0"/><rect x="0.2" y="3.2" width="2.5" height="2.5" fill="#3a78c0"/><rect x="3.2" y="3.2" width="2.5" height="2.5" fill="#3a78c0"/></svg><div class="t r" style="left:169px;top:492.99px;font-size:7.4px;color:#4e4e4e;font-weight:400;letter-spacing:0.22px;-webkit-text-stroke:0.1px currentColor">AUS-W11BLCK-DM</div><div class="t r" style="right:621.7px;top:492.90px;font-size:7.5px;color:#444;font-weight:400;">3</div><div class="t" style="left:445.5px;top:291.14px;font-size:8.4px;color:#262626;font-weight:700;">Approved and pending patches by age</div><div style="position:absolute;left:448px;top:320px;width:263px;height:0px;border-top:1px dotted #d6d6d6"></div><div style="position:absolute;left:448px;top:367px;width:263px;height:0px;border-top:1px dotted #d6d6d6"></div><div style="position:absolute;left:448px;top:401px;width:263px;height:0px;border-top:1px dotted #d6d6d6"></div><div style="position:absolute;left:448px;top:435px;width:263px;height:1px;background:#dcdcdc"></div><div style="position:absolute;left:447px;top:320.7px;width:1px;height:115px;background:#ececec"></div><div style="position:absolute;left:474.2px;top:320.7px;width:12.3px;height:115.0px;background:#8470c8"></div><div class="t" style="left:480.34999999999997px;transform:translateX(-50%);top:310.48px;font-size:8.0px;color:#222;font-weight:700;">51</div><div class="t r" style="left:480.34999999999997px;transform:translateX(-50%);top:438.49px;font-size:6.8px;color:#444;font-weight:400;">0-29</div><div style="position:absolute;left:540.3px;top:429.0px;width:12.3px;height:6.7px;background:#8470c8"></div><div class="t" style="left:546.4499999999999px;transform:translateX(-50%);top:418.48px;font-size:8.0px;color:#222;font-weight:700;">3</div><div class="t r" style="left:546.4499999999999px;transform:translateX(-50%);top:438.49px;font-size:6.8px;color:#444;font-weight:400;">30-59</div><div style="position:absolute;left:606.4px;top:429.0px;width:12.3px;height:6.7px;background:#8470c8"></div><div class="t" style="left:612.55px;transform:translateX(-50%);top:418.48px;font-size:8.0px;color:#222;font-weight:700;">3</div><div class="t r" style="left:612.55px;transform:translateX(-50%);top:438.49px;font-size:6.8px;color:#444;font-weight:400;">60-89</div><div style="position:absolute;left:672.3px;top:424.0px;width:12.3px;height:11.7px;background:#8470c8"></div><div class="t" style="left:678.4499999999999px;transform:translateX(-50%);top:413.48px;font-size:8.0px;color:#222;font-weight:700;">5</div><div class="t r" style="left:678.4499999999999px;transform:translateX(-50%);top:438.49px;font-size:6.8px;color:#444;font-weight:400;">> 90</div><div class="t r" style="left:578.5px;transform:translateX(-50%);top:448.07px;font-size:7.3px;color:#444;font-weight:400;">Days</div><div class="t" style="left:150.6px;top:537.14px;font-size:8.4px;color:#262626;font-weight:700;">Top 10 devices with most failed patches</div><svg style="position:absolute;left:154.5px;top:558.2px;" width="6" height="6" viewBox="0 0 6 6"><rect x="0.2" y="0.2" width="2.5" height="2.5" fill="#3a78c0"/><rect x="3.2" y="0.2" width="2.5" height="2.5" fill="#3a78c0"/><rect x="0.2" y="3.2" width="2.5" height="2.5" fill="#3a78c0"/><rect x="3.2" y="3.2" width="2.5" height="2.5" fill="#3a78c0"/></svg><div class="t r" style="left:168.7px;top:557.99px;font-size:7.4px;color:#4e4e4e;font-weight:400;letter-spacing:0.22px;-webkit-text-stroke:0.1px currentColor">AUS-W11-BLCK-03</div><div class="t r" style="right:621.5px;top:557.90px;font-size:7.5px;color:#444;font-weight:400;">1</div><div style="position:absolute;left:150.6px;top:572px;width:265.4px;height:1px;background:#e0e0e0"></div><svg style="position:absolute;left:154.5px;top:578.5px;" width="6" height="6" viewBox="0 0 6 6"><rect x="0.2" y="0.2" width="2.5" height="2.5" fill="#3a78c0"/><rect x="3.2" y="0.2" width="2.5" height="2.5" fill="#3a78c0"/><rect x="0.2" y="3.2" width="2.5" height="2.5" fill="#3a78c0"/><rect x="3.2" y="3.2" width="2.5" height="2.5" fill="#3a78c0"/></svg><div class="t r" style="left:168.7px;top:577.99px;font-size:7.4px;color:#4e4e4e;font-weight:400;letter-spacing:0.22px;-webkit-text-stroke:0.1px currentColor">SEDEMOWIN11-01</div><div class="t r" style="right:621.5px;top:577.90px;font-size:7.5px;color:#444;font-weight:400;">1</div><div style="position:absolute;left:150.6px;top:592px;width:265.4px;height:1px;background:#e0e0e0"></div><svg style="position:absolute;left:154px;top:597.8000000000001px;" width="7" height="8" viewBox="0 0 7 8"><path d="M3.5 2.3 C2.5 1.8 0.8 2 0.8 4.2 C0.8 6 2 7.6 2.8 7.4 C3.2 7.3 3.8 7.3 4.2 7.4 C5 7.6 6.2 6 6.3 5.2 C5.5 4.8 5.3 3.2 6.1 2.6 C5.4 1.8 4.3 1.9 3.5 2.3 Z M3.6 1.9 C3.6 1 4.2 0.4 4.9 0.3 C4.9 1.1 4.4 1.8 3.6 1.9 Z" fill="#3a78c0"/></svg><div class="t r" style="left:168.7px;top:598.99px;font-size:7.4px;color:#4e4e4e;font-weight:400;letter-spacing:0.22px;-webkit-text-stroke:0.1px currentColor">na-demo-mac-seq-01.ad.ninjarmm.net</div><div class="t r" style="right:621.5px;top:598.90px;font-size:7.5px;color:#444;font-weight:400;">1</div><div class="t" style="left:445.8px;top:488.14px;font-size:8.4px;color:#262626;font-weight:700;">Approved and pending patches by category</div><div class="t r" style="left:449.4px;top:508.65px;font-size:7.8px;color:#505050;font-weight:400;">Critical updates</div><div class="t r" style="right:326.4px;top:508.90px;font-size:7.5px;color:#505050;font-weight:400;">1</div><div style="position:absolute;left:444.4px;top:522px;width:267px;height:1px;background:#e0e0e0"></div><div class="t r" style="left:449.4px;top:528.65px;font-size:7.8px;color:#505050;font-weight:400;">Service packs</div><div class="t r" style="right:326.4px;top:528.90px;font-size:7.5px;color:#505050;font-weight:400;">0</div><div style="position:absolute;left:444.4px;top:542px;width:267px;height:1px;background:#e0e0e0"></div><div class="t r" style="left:449.4px;top:548.65px;font-size:7.8px;color:#505050;font-weight:400;">Feature packs</div><div class="t r" style="right:326.4px;top:548.90px;font-size:7.5px;color:#505050;font-weight:400;">0</div><div style="position:absolute;left:444.4px;top:562px;width:267px;height:1px;background:#e0e0e0"></div><div class="t r" style="left:449.4px;top:568.65px;font-size:7.8px;color:#505050;font-weight:400;">Regular updates</div><div class="t r" style="right:326.4px;top:568.90px;font-size:7.5px;color:#505050;font-weight:400;">5</div><div style="position:absolute;left:444.4px;top:582px;width:267px;height:1px;background:#e0e0e0"></div><div class="t r" style="left:449.4px;top:589.65px;font-size:7.8px;color:#505050;font-weight:400;">Definition packs</div><div class="t r" style="right:326.4px;top:589.90px;font-size:7.5px;color:#505050;font-weight:400;">3</div><div style="position:absolute;left:444.4px;top:602px;width:267px;height:1px;background:#e0e0e0"></div><div class="t r" style="left:449.4px;top:609.65px;font-size:7.8px;color:#505050;font-weight:400;">Update rollups</div><div class="t r" style="right:326.4px;top:609.90px;font-size:7.5px;color:#505050;font-weight:400;">0</div><div style="position:absolute;left:444.4px;top:623px;width:267px;height:1px;background:#e0e0e0"></div><div class="t r" style="left:449.4px;top:629.65px;font-size:7.8px;color:#505050;font-weight:400;">Security updates</div><div class="t r" style="right:326.4px;top:629.90px;font-size:7.5px;color:#505050;font-weight:400;">28</div><div style="position:absolute;left:444.4px;top:643px;width:267px;height:1px;background:#e0e0e0"></div><div class="t r" style="left:449.4px;top:649.65px;font-size:7.8px;color:#505050;font-weight:400;">Driver updates</div><div class="t r" style="right:326.4px;top:649.90px;font-size:7.5px;color:#505050;font-weight:400;">22</div><div style="position:absolute;left:444.4px;top:663px;width:267px;height:1px;background:#e0e0e0"></div><div class="t" style="left:741px;top:558.14px;font-size:8.4px;color:#262626;font-weight:700;">Top 5 patch failures</div><div class="t" style="left:744.8px;top:578.07px;font-size:7.3px;color:#333;font-weight:700;">OS</div><div class="t" style="left:767.7px;top:578.07px;font-size:7.3px;color:#333;font-weight:700;">Error code</div><div class="t" style="right:34.799999999999955px;top:578.07px;font-size:7.3px;color:#333;font-weight:700;">Count</div><div style="position:absolute;left:741px;top:590px;width:265.5px;height:1.2px;background:#dadada"></div><svg style="position:absolute;left:858px;top:648px;" width="32" height="22" viewBox="0 0 32 22"><path d="M3 18 H29 V8 L24.5 2.5 H8 L3 8 Z" fill="#ffffff" stroke="#e2e2e6" stroke-width="0.8"/><path d="M3 10 H9 V12.5 H20 V10 H29 V22 H3 Z" fill="#f1f2f8" stroke="#e2e2e6" stroke-width="0.8"/></svg>
</div>
</body></html>
